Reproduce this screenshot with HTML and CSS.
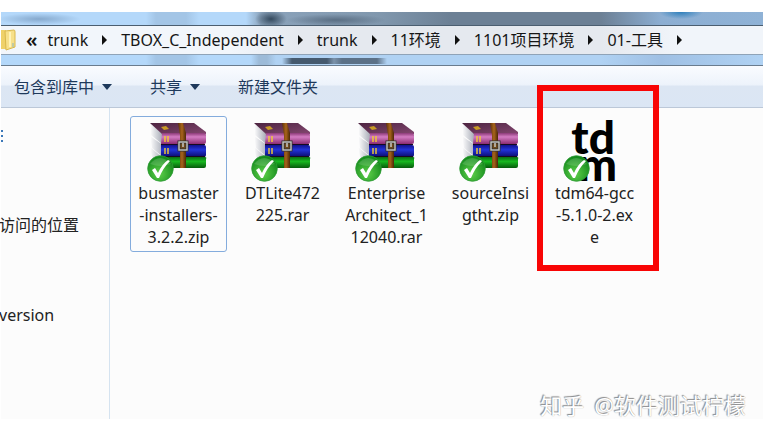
FILE: index.html
```html
<!DOCTYPE html>
<html lang="zh-CN">
<head>
<meta charset="utf-8">
<title>01-工具</title>
<link rel="stylesheet" href="styles.css">
</head>
<body>
<svg class="defs" width="0" height="0" aria-hidden="true">
  <defs>
    <linearGradient id="pink" x2="0" y2="1"><stop offset="0" stop-color="#8c3a78"/><stop offset=".35" stop-color="#d47cc2"/><stop offset="1" stop-color="#8a2c72"/></linearGradient>
    <linearGradient id="blue" x2="0" y2="1"><stop offset="0" stop-color="#10128c"/><stop offset=".4" stop-color="#2233d8"/><stop offset="1" stop-color="#0a0a6c"/></linearGradient>
    <linearGradient id="green" x2="0" y2="1"><stop offset="0" stop-color="#0a6a12"/><stop offset=".4" stop-color="#18b820"/><stop offset="1" stop-color="#075a0c"/></linearGradient>
    <linearGradient id="cover" x2="1" y2="1"><stop offset="0" stop-color="#4c2440"/><stop offset="1" stop-color="#83466f"/></linearGradient>
    <linearGradient id="pages"><stop offset="0" stop-color="#ffffff"/><stop offset="1" stop-color="#a9adb8"/></linearGradient>
    <linearGradient id="strap"><stop offset="0" stop-color="#5c3208"/><stop offset=".5" stop-color="#a8641c"/><stop offset="1" stop-color="#4c2806"/></linearGradient>
    <radialGradient id="ball" cx=".45" cy=".7" r=".65"><stop offset="0" stop-color="#5ed04a"/><stop offset="1" stop-color="#148a1c"/></radialGradient>
    <symbol id="badge" viewBox="0 0 27 27">
      <circle cx="13.5" cy="13.5" r="12.8" fill="url(#ball)" stroke="#2c9a34" stroke-width=".8"/>
      <path d="M3 9Q13 -3 24 9Q14 13 3 9Z" fill="#fff" opacity=".15"/>
      <path d="M5 15L8 13L11 18Q15 9 21 5L23 6Q16 13 12 23H10Z" fill="#fff"/>
    </symbol>
    <symbol id="archive" viewBox="2 0 64 60">
      <path d="M5 25L17 35V45L7 35Z" fill="url(#pages)"/>
      <path d="M17 35H60Q62 35 61 37V44Q61 46 59 46H17Z" fill="url(#green)"/>
      <path d="M5 14L18 23V35L7 26Z" fill="url(#pages)"/>
      <path d="M16 23H59Q61 23 61 25V33Q61 35 59 35H16Z" fill="url(#blue)"/>
      <path d="M5 1L17 11V22L6 13Z" fill="url(#pages)"/>
      <path d="M5 1H49L61 10V12H17Z" fill="url(#cover)"/>
      <path d="M17 11H59Q61 11 61 13V20Q61 22 59 22H16Z" fill="url(#pink)"/>
      <path d="M16 22.5H60M16 34.5H60" stroke="#160a20"/>
      <path d="M20 14V20M23 14V20M20 26V32M23 26V32" stroke="#f4cc32" stroke-width="1.4"/>
      <path d="M16 5L21 4L24 7L19 8Z" fill="#c99b25"/>
      <path d="M33 1H38L41 11V46H35V13Z" fill="url(#strap)"/>
      <rect x="34" y="20" width="8" height="8" fill="#6e4a1c" stroke="#33312c" stroke-width="3"/>
      <rect x="34" y="20" width="8" height="8" fill="none" stroke="#c6c8c6" stroke-width="1.4"/>
      <path d="M38 21V25" stroke="#c6c8c6" stroke-width="1.5"/>
      <use href="#badge" x="2" y="33" width="27" height="27"/>
    </symbol>
  </defs>
</svg>
<main class="window">
  <header class="glass">
    <nav class="address" aria-label="路径">
      <svg class="folder" width="15" height="22" viewBox="0 0 15 22" aria-hidden="true"><path d="M0 1H5V20H0Z" fill="#efd169"/><path d="M4 2L13 1Q14 1 14 3V18L5 21Z" fill="#f7e08a" stroke="#d9b84c"/><path d="M9 3V18" stroke="#fff3b8" stroke-width="2"/><path d="M12 14V18" stroke="#88b4ba"/></svg>
      <button class="back" type="button">«</button>
      <a href="#">trunk</a><i class="arrow"></i>
      <a href="#">TBOX_C_Independent</a><i class="arrow"></i>
      <a href="#">trunk</a><i class="arrow"></i>
      <a href="#">11环境</a><i class="arrow"></i>
      <a href="#">1101项目环境</a><i class="arrow"></i>
      <a href="#">01-工具</a><i class="arrow"></i>
    </nav>
  </header>
  <div class="toolbar">
    <button type="button">包含到库中<i class="caret"></i></button>
    <button type="button">共享<i class="caret"></i></button>
    <button type="button">新建文件夹</button>
  </div>
  <div class="body">
    <aside class="sidebar">
      <i class="dots"></i>
      <a href="#">访问的位置</a>
      <a href="#">version</a>
    </aside>
    <section class="files">
      <div class="file selected"><svg class="icon" aria-hidden="true"><use href="#archive"/></svg><span>busmaster<br>-installers-<br>3.2.2.zip</span></div>
      <div class="file"><svg class="icon" aria-hidden="true"><use href="#archive"/></svg><span>DTLite472<br>225.rar</span></div>
      <div class="file"><svg class="icon" aria-hidden="true"><use href="#archive"/></svg><span>Enterprise<br>Architect_1<br>12040.rar</span></div>
      <div class="file"><svg class="icon" aria-hidden="true"><use href="#archive"/></svg><span>sourceInsi<br>gtht.zip</span></div>
      <div class="file"><svg class="icon" viewBox="0 0 64 60"><text class="logo" x="52" y="32" text-anchor="end">td</text><text class="logo" x="54" y="59" text-anchor="end">m</text><use href="#badge" x="0" y="33" width="27" height="27"/></svg><span>tdm64-gcc<br>-5.1.0-2.ex<br>e</span><i class="highlight"></i></div>
    </section>
    <div class="watermark"><span>知乎</span><span>@软件测试柠檬</span></div>
  </div>
</main>
</body>
</html>
```
FILE: styles.css
```css
* { box-sizing: border-box; }
body {
  margin: 0;
  background: #fff;
  color: #222;
  font: 16px/22px "Noto Sans", "Noto Sans CJK SC", sans-serif;
}
a { color: inherit; text-decoration: none; }
button { padding: 0; border: 0; background: none; color: inherit; font: inherit; }
.defs { position: absolute; }
.window { margin: 12px 0 0 1px; }

.glass {
  padding: 13px 0 10px;
  border-bottom: 1px solid #6a7c8e;
  background:
    radial-gradient(ellipse 42px 6px at 38px 7px, #86a9cd, transparent),
    radial-gradient(ellipse 16px 9px at 270px 7px, #34495d, transparent),
    radial-gradient(ellipse 50px 6px at 335px 8px, #5a6e83, transparent),
    radial-gradient(ellipse 22px 7px at 680px 0, #2f80bc, transparent),
    linear-gradient(90deg, transparent, #465a6e 10px 45px, #7b92aa 52px, #5c7187 60px 95px, transparent) 281px 46px / 105px 6px no-repeat,
    linear-gradient(90deg, #b4d8fa 0 145px, #a3c5e6 155px 185px, #b4d8fa 198px 245px, #8ba3bb 260px, #8097ad 380px, #6c8095 450px 600px, #8caed2 660px, #8fb2d6) 0 0 / 100% 14px no-repeat,
    linear-gradient(90deg, #b4d8fa 0 145px, #a3c5e6 155px 185px, #b4d8fa 198px 250px, #9dbbd8 258px 266px, #b0d2f3 275px 600px, #9fc0e4 660px, #b0d2f3);
}
.address {
  display: flex;
  align-items: center;
  gap: 14px;
  height: 30px;
  border-top: 1px solid #4b5e70;
  border-bottom: 1px solid #8fa3b7;
  background: linear-gradient(90deg, #f2f6fb 0 230px, #e5e9ef 300px 600px, #f1f5fa 680px);
  color: #161616;
}
.folder { margin-right: -4px; }
.back { margin-right: -4px; font-size: 20px; font-weight: 600; }
.arrow { border-left: 5px solid #111; border-top: 5px solid transparent; border-bottom: 5px solid transparent; }

.toolbar {
  display: flex;
  align-items: center;
  gap: 38px;
  height: 42px;
  padding-left: 13px;
  border-bottom: 1px solid #bcc8d8;
  background: linear-gradient(#fafcff, #edf3fb 45%, #dce6f3 50%, #dbe6f4);
  color: #1e395b;
}
.toolbar button { display: flex; align-items: center; gap: 8px; }
.caret { border-top: 6px solid #1e395b; border-left: 5px solid transparent; border-right: 5px solid transparent; }

.body { position: relative; display: flex; min-height: 311px; background: #fcfcfc; }
.sidebar {
  display: flex;
  flex-direction: column;
  width: 109px;
  padding-top: 22px;
  border-right: 1px solid #d5e3f0;
}
.dots { width: 2px; height: 12px; margin-bottom: 72px; background: repeating-linear-gradient(#3c78b8 0 2px, transparent 2px 5px); }
.sidebar a { margin: 0 0 68px -2px; }
.files { display: flex; flex-wrap: wrap; align-items: flex-start; gap: 7px; flex: 1; padding: 8px 20px; }
.file {
  position: relative;
  display: flex;
  flex-direction: column;
  align-items: center;
  width: 97px;
  padding: 5px 0 3px;
  border: 1px solid transparent;
  border-radius: 3px;
  text-align: center;
}
.selected { border-color: #84acdd; }
.icon { width: 64px; height: 60px; overflow: visible; }
.logo { font: 900 46px Lato, sans-serif; fill: #000; }
.highlight { position: absolute; inset: -32px -17px -20px -10px; border: 6px solid #f80505; }
.watermark {
  position: absolute;
  right: 17px;
  bottom: 0;
  display: flex;
  gap: 10px;
  color: #fff;
  font-size: 22px;
  line-height: 28px;
  text-shadow: -1px -1px 1px #888, 0 0 1px #999;
}
```
